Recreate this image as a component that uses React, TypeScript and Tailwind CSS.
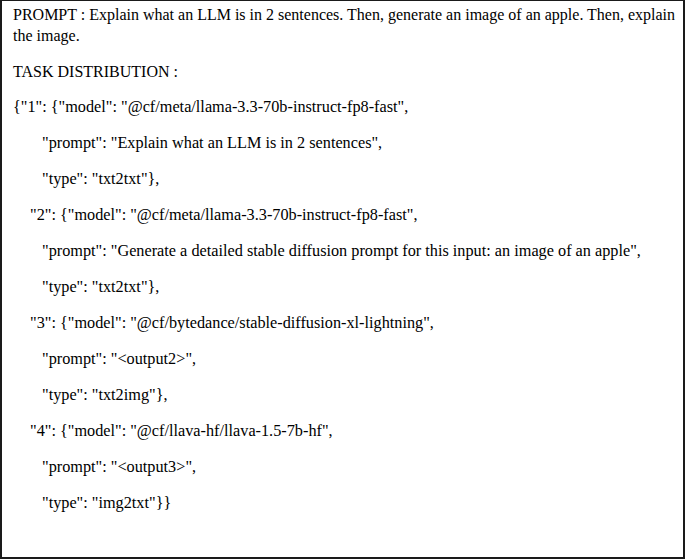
import React from "react";

const lines: { text: string; indent: string }[] = [
  { text: '{"1": {"model": "@cf/meta/llama-3.3-70b-instruct-fp8-fast",', indent: "pl-0" },
  { text: '"prompt": "Explain what an LLM is in 2 sentences",', indent: "pl-[29px]" },
  { text: '"type": "txt2txt"},', indent: "pl-[29px]" },
  { text: '"2": {"model": "@cf/meta/llama-3.3-70b-instruct-fp8-fast",', indent: "pl-[17px]" },
  { text: '"prompt": "Generate a detailed stable diffusion prompt for this input: an image of an apple",', indent: "pl-[29px]" },
  { text: '"type": "txt2txt"},', indent: "pl-[29px]" },
  { text: '"3": {"model": "@cf/bytedance/stable-diffusion-xl-lightning",', indent: "pl-[17px]" },
  { text: '"prompt": "<output2>",', indent: "pl-[29px]" },
  { text: '"type": "txt2img"},', indent: "pl-[29px]" },
  { text: '"4": {"model": "@cf/llava-hf/llava-1.5-7b-hf",', indent: "pl-[17px]" },
  { text: '"prompt": "<output3>",', indent: "pl-[29px]" },
  { text: '"type": "img2txt"}}', indent: "pl-[29px]" },
];

export default function App() {
  return (
    <div className="w-[685px] h-[559px] bg-white">
      <div
        className="w-[685px] h-[559px] border-x-2 border-b-2 border-t border-[#1a1a1a] pl-[11px] pr-[6px] pt-[3px] text-[16px] leading-[21px] text-black"
        style={{ fontFamily: '"Liberation Serif", "Times New Roman", serif' }}
      >
        <p>
          PROMPT : Explain what an LLM is in 2 sentences. Then, generate an image of an apple. Then, explain the image.
        </p>
        <p className="mt-[15px]">TASK DISTRIBUTION :</p>
        {lines.map((l, i) => (
          <p key={i} className={`mt-[15px] whitespace-pre text-[16.25px] ${l.indent}`}>
            {l.text}
          </p>
        ))}
      </div>
    </div>
  );
}
